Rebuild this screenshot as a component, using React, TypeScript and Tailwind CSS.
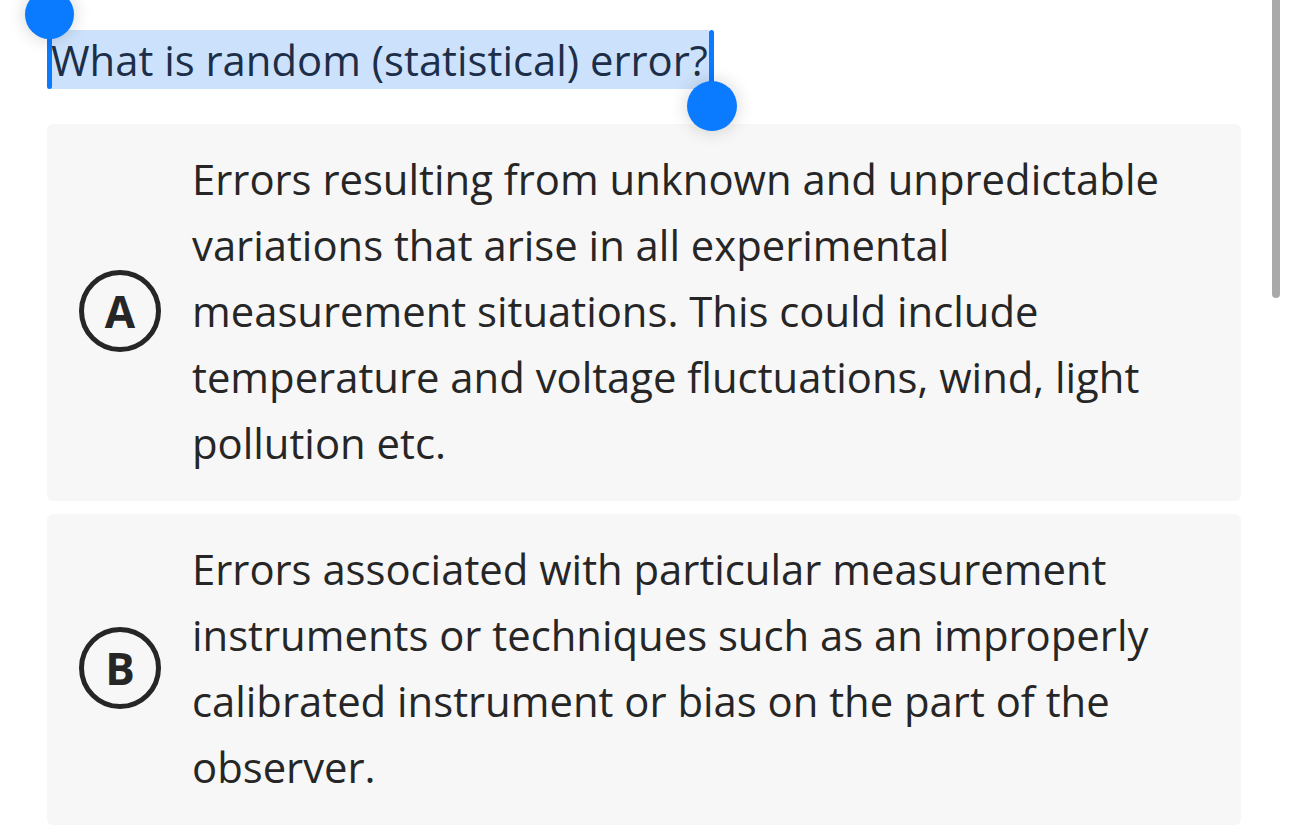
import React from "react";

interface Option {
  letter: string;
  text: string;
}

const options: Option[] = [
  {
    letter: "A",
    text: "Errors resulting from unknown and unpredictable variations that arise in all experimental measurement situations. This could include temperature and voltage fluctuations, wind, light pollution etc.",
  },
  {
    letter: "B",
    text: "Errors associated with particular measurement instruments or techniques such as an improperly calibrated instrument or bias on the part of the observer.",
  },
];

const font = { fontFamily: '"Open Sans", "Noto Sans", sans-serif' };

// iOS-style selection handles: caret bar + round grip, drawn over the selected text
const SelectionHandles = () => (
  <>
    <span className="pointer-events-none absolute left-[-1px] top-0 h-full w-[5px] rounded-b-full bg-[#0a7aff]" />
    <span className="pointer-events-none absolute left-[-23px] top-[-40px] h-[49px] w-[49px] rounded-full bg-[#0a7aff] shadow-[0_0_18px_rgba(0,0,0,0.18)]" />
    <span className="pointer-events-none absolute right-[-5px] top-0 h-[75px] w-[5px] rounded-t-full bg-[#0a7aff]" />
    <span className="pointer-events-none absolute right-[-28px] top-[51px] h-[50px] w-[50px] rounded-full bg-[#0a7aff] shadow-[0_0_18px_rgba(0,0,0,0.18)]" />
  </>
);

export default function App() {
  return (
    <main className="relative h-[836px] w-[1290px] overflow-hidden bg-white" style={font}>
      <div className="flex flex-col gap-[35px] pl-[47px] pr-[49px] pt-[30px]">
        <h1 className="flex pl-[1px]">
          <span className="relative bg-[#cce2fc] pl-[3px] pr-[1px] text-[41.8px] leading-[59px] text-[#1d2e48]">
            What is random (statistical) error?
            <SelectionHandles />
          </span>
        </h1>

        <ul className="flex flex-col gap-[13px]">
          {options.map((opt) => (
            <li
              key={opt.letter}
              className="flex items-center gap-[31px] rounded-[6px] bg-[#f7f7f7] pb-[25px] pl-[32px] pr-[60px] pt-[22px]"
            >
              <span className="flex h-[82px] w-[82px] shrink-0 items-center justify-center rounded-full border-[5px] border-[#262626] text-[44px] font-bold leading-none text-[#262626]">
                {opt.letter}
              </span>
              <p className="text-[41.8px] leading-[66px] text-[#262626]">{opt.text}</p>
            </li>
          ))}
        </ul>
      </div>

      {/* overlay scrollbar */}
      <div className="absolute right-[10px] top-0 h-[298px] w-[8px] rounded-b-full bg-[#a9a9a9]" />
    </main>
  );
}
